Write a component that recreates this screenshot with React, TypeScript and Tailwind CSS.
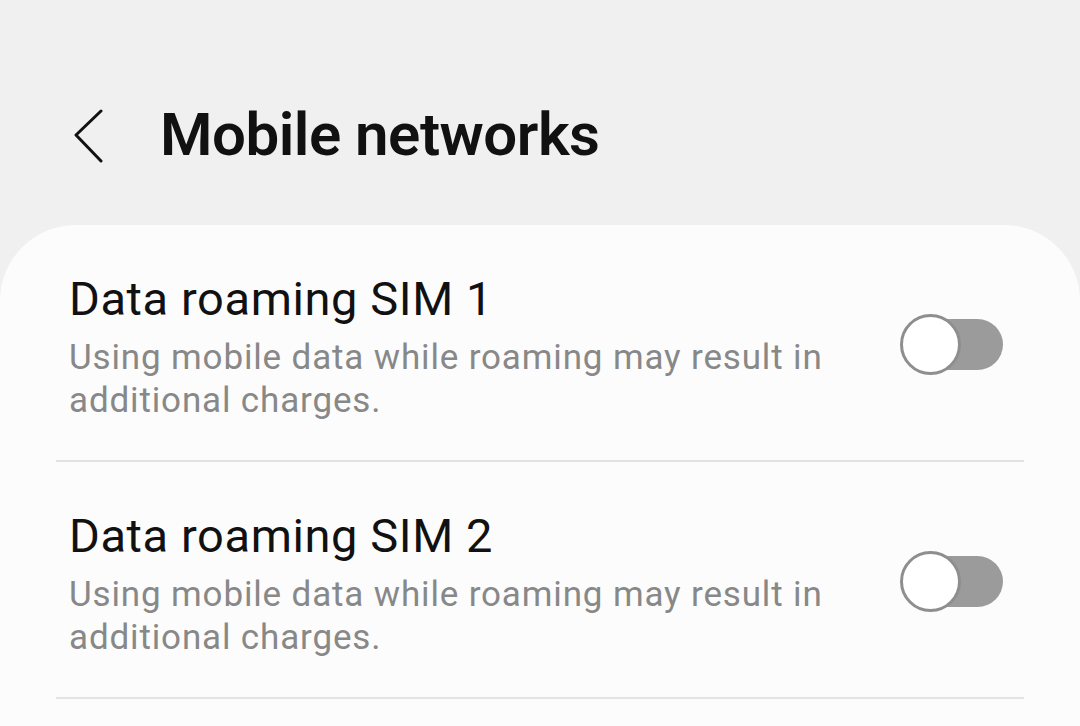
import React from 'react';

interface RoamingRowProps {
    title: string;
    description: string;
    enabled?: boolean;
    divider?: boolean;
}

/** Off-state switch in the One UI style: grey track, outlined white thumb on the left. */
const Toggle = ({ enabled = false }: { enabled?: boolean }) => (
    <div className="relative h-[61px] w-[103px] shrink-0" role="switch" aria-checked={enabled}>
        <div className="absolute right-0 top-[5px] h-[51px] w-[80px] rounded-full bg-[#9b9b9b]" />
        <div className="absolute left-0 top-0 h-[61px] w-[61px] rounded-full border-[3px] border-[#8e8e8e] bg-white" />
    </div>
);

const RoamingRow = ({ title, description, enabled, divider = true }: RoamingRowProps) => (
    <div>
        <div className="flex items-center pl-[69px] pr-[77px] pt-[46px] pb-[38px]">
            <div className="flex-1">
                <div className="text-[47px] leading-[56px] tracking-[0.6px] text-[#111111]">{title}</div>
                <div className="mt-[9px] w-[800px] text-[35px] leading-[43px] tracking-[0.85px] text-[#888888]">{description}</div>
            </div>
            <div className="mt-[-4px]">
                <Toggle enabled={enabled} />
            </div>
        </div>
        {divider && <div className="mx-[56px] h-[2px] bg-[#e3e3e3]" />}
    </div>
);

export default function App() {
    return (
        <div className="flex h-[726px] w-[1080px] flex-col overflow-hidden bg-[#f0f0f0]" style={{ fontFamily: 'Roboto, "Noto Sans", sans-serif' }}>
            <header className="flex h-[225px] shrink-0 items-start pt-[100px]">
                <button type="button" className="ml-[72px] flex h-[70px] w-[34px] items-center justify-center" aria-label="Back">
                    <svg width="34" height="56" viewBox="0 0 34 56" fill="none">
                        <path d="M29 4 L4 28 L29 54" stroke="#111111" strokeWidth="3" strokeLinecap="round" strokeLinejoin="round" />
                    </svg>
                </button>
                <h1 className="ml-[54px] text-[60px] font-semibold leading-[70px] tracking-[-0.5px] text-[#111111]">Mobile networks</h1>
            </header>
            <main className="flex-1 rounded-t-[76px] bg-[#fcfcfc]">
                <RoamingRow
                    title="Data roaming SIM 1"
                    description="Using mobile data while roaming may result in additional charges."
                />
                <RoamingRow
                    title="Data roaming SIM 2"
                    description="Using mobile data while roaming may result in additional charges."
                />
            </main>
        </div>
    );
}
